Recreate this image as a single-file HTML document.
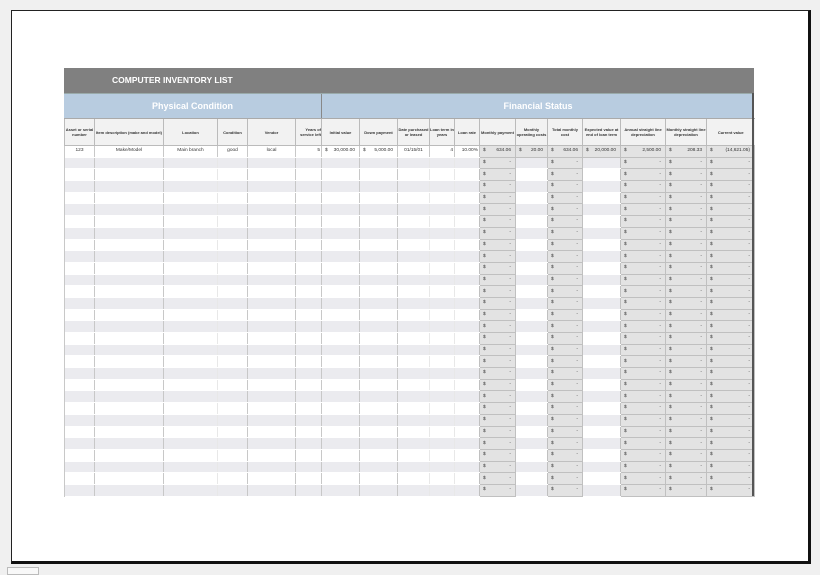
<!DOCTYPE html>
<html><head><meta charset="utf-8"><style>
html,body{margin:0;padding:0;width:820px;height:571px;background:#f0f0f0;overflow:hidden;font-family:"Liberation Sans",sans-serif;}
.page{position:absolute;left:11px;top:10px;width:796px;height:550px;background:#fff;border:1px solid #222;border-right:3px solid #111;border-bottom:3px solid #111;}
.tab{position:absolute;left:64px;top:68px;width:690px;}
.t1{height:25px;background:#808080;color:#fff;font-weight:bold;font-size:8.5px;line-height:25px;padding-left:48px;box-sizing:border-box;}
.t2{height:25px;background:#b8cce0;position:relative;border-top:1px solid #9aa;box-sizing:border-box;}
.t2 div{position:absolute;top:0;height:24px;line-height:24px;color:#fff;font-weight:bold;font-size:9px;text-align:center;}
table{border-collapse:collapse;table-layout:fixed;width:690px;}
th{height:26px;background:#f2f2f2;font-size:4px;font-weight:bold;color:#333;border-left:1px solid #bbb;border-top:1px solid #aaa;border-bottom:1px solid #bbb;padding:0;line-height:5px;overflow:hidden;}
td{height:10.7px;padding:0 1px;font-size:4.8px;color:#333;border-left:1px solid #c8c8c8;border-bottom:1px solid transparent;overflow:hidden;white-space:nowrap;line-height:10px;background:#fff;}
tr:nth-child(odd) td{background:#ebebef;}
tr.w td{background:#fff;}
td.n{border-left:1px solid #e8e8e8;}
td.g,tr:nth-child(odd) td.g,tr.w td.g{background:#e3e3e3;border:1px solid #c0c0c0;}
td i{font-style:normal;float:left;padding-left:2px;}
td b{font-weight:normal;float:right;padding-right:3px;}
.c{text-align:center}.r{text-align:right}
.rb{position:absolute;left:688px;top:25px;width:2px;height:403px;background:#555;}
</style></head><body>
<div class="page"></div>
<div style="position:absolute;left:7px;top:567px;width:30px;height:6px;border:1px solid #bbb;background:#f8f8f8"></div>
<div class="tab">
<div class="t1">COMPUTER INVENTORY LIST</div>
<div class="t2"><div style="left:0;width:257px;border-right:1px solid #888">Physical Condition</div><div style="left:258px;width:432px">Financial Status</div></div>
<table>
<colgroup><col style="width:30px"><col style="width:69px"><col style="width:54px"><col style="width:30px"><col style="width:48px"><col style="width:26px"><col style="width:38px"><col style="width:38px"><col style="width:32px"><col style="width:25px"><col style="width:25px"><col style="width:36px"><col style="width:32px"><col style="width:35px"><col style="width:38px"><col style="width:45px"><col style="width:41px"><col style="width:48px"></colgroup>
<tr><th>Asset or serial number</th><th>Item description (make and model)</th><th>Location</th><th>Condition</th><th>Vendor</th><th style="text-align:right">Years of service left</th><th>Initial value</th><th>Down payment</th><th>Date purchased or leased</th><th>Loan term in years</th><th>Loan rate</th><th>Monthly payment</th><th>Monthly operating costs</th><th>Total monthly cost</th><th>Expected value at end of loan term</th><th>Annual straight line depreciation</th><th>Monthly straight line depreciation</th><th>Current value</th></tr>
<tr class="w"><td class="c">123</td><td class="c">Make/Model</td><td class="c">Main branch</td><td class="c">good</td><td class="c">local</td><td class="r">5</td><td><i>$</i><b>30,000.00</b></td><td><i>$</i><b>5,000.00</b></td><td class="c">01/15/01</td><td class="r">4</td><td class="r">10.00%</td><td class="g"><i>$</i><b>634.06</b></td><td class="g"><i>$</i><b>20.00</b></td><td class="g"><i>$</i><b>634.06</b></td><td class="g"><i>$</i><b>20,000.00</b></td><td class="g"><i>$</i><b>2,500.00</b></td><td class="g"><i>$</i><b>208.33</b></td><td class="g"><i>$</i><b>(14,621.05)</b></td></tr>
<tr><td></td><td></td><td></td><td class="n"></td><td></td><td></td><td></td><td></td><td></td><td class="n"></td><td class="n"></td><td class="g"><i>$</i><b>-</b></td><td></td><td class="g"><i>$</i><b>-</b></td><td></td><td class="g"><i>$</i><b>-</b></td><td class="g"><i>$</i><b>-</b></td><td class="g"><i>$</i><b>-</b></td></tr>
<tr><td></td><td></td><td></td><td class="n"></td><td></td><td></td><td></td><td></td><td></td><td class="n"></td><td class="n"></td><td class="g"><i>$</i><b>-</b></td><td></td><td class="g"><i>$</i><b>-</b></td><td></td><td class="g"><i>$</i><b>-</b></td><td class="g"><i>$</i><b>-</b></td><td class="g"><i>$</i><b>-</b></td></tr>
<tr><td></td><td></td><td></td><td class="n"></td><td></td><td></td><td></td><td></td><td></td><td class="n"></td><td class="n"></td><td class="g"><i>$</i><b>-</b></td><td></td><td class="g"><i>$</i><b>-</b></td><td></td><td class="g"><i>$</i><b>-</b></td><td class="g"><i>$</i><b>-</b></td><td class="g"><i>$</i><b>-</b></td></tr>
<tr><td></td><td></td><td></td><td class="n"></td><td></td><td></td><td></td><td></td><td></td><td class="n"></td><td class="n"></td><td class="g"><i>$</i><b>-</b></td><td></td><td class="g"><i>$</i><b>-</b></td><td></td><td class="g"><i>$</i><b>-</b></td><td class="g"><i>$</i><b>-</b></td><td class="g"><i>$</i><b>-</b></td></tr>
<tr><td></td><td></td><td></td><td class="n"></td><td></td><td></td><td></td><td></td><td></td><td class="n"></td><td class="n"></td><td class="g"><i>$</i><b>-</b></td><td></td><td class="g"><i>$</i><b>-</b></td><td></td><td class="g"><i>$</i><b>-</b></td><td class="g"><i>$</i><b>-</b></td><td class="g"><i>$</i><b>-</b></td></tr>
<tr><td></td><td></td><td></td><td class="n"></td><td></td><td></td><td></td><td></td><td></td><td class="n"></td><td class="n"></td><td class="g"><i>$</i><b>-</b></td><td></td><td class="g"><i>$</i><b>-</b></td><td></td><td class="g"><i>$</i><b>-</b></td><td class="g"><i>$</i><b>-</b></td><td class="g"><i>$</i><b>-</b></td></tr>
<tr><td></td><td></td><td></td><td class="n"></td><td></td><td></td><td></td><td></td><td></td><td class="n"></td><td class="n"></td><td class="g"><i>$</i><b>-</b></td><td></td><td class="g"><i>$</i><b>-</b></td><td></td><td class="g"><i>$</i><b>-</b></td><td class="g"><i>$</i><b>-</b></td><td class="g"><i>$</i><b>-</b></td></tr>
<tr><td></td><td></td><td></td><td class="n"></td><td></td><td></td><td></td><td></td><td></td><td class="n"></td><td class="n"></td><td class="g"><i>$</i><b>-</b></td><td></td><td class="g"><i>$</i><b>-</b></td><td></td><td class="g"><i>$</i><b>-</b></td><td class="g"><i>$</i><b>-</b></td><td class="g"><i>$</i><b>-</b></td></tr>
<tr><td></td><td></td><td></td><td class="n"></td><td></td><td></td><td></td><td></td><td></td><td class="n"></td><td class="n"></td><td class="g"><i>$</i><b>-</b></td><td></td><td class="g"><i>$</i><b>-</b></td><td></td><td class="g"><i>$</i><b>-</b></td><td class="g"><i>$</i><b>-</b></td><td class="g"><i>$</i><b>-</b></td></tr>
<tr><td></td><td></td><td></td><td class="n"></td><td></td><td></td><td></td><td></td><td></td><td class="n"></td><td class="n"></td><td class="g"><i>$</i><b>-</b></td><td></td><td class="g"><i>$</i><b>-</b></td><td></td><td class="g"><i>$</i><b>-</b></td><td class="g"><i>$</i><b>-</b></td><td class="g"><i>$</i><b>-</b></td></tr>
<tr><td></td><td></td><td></td><td class="n"></td><td></td><td></td><td></td><td></td><td></td><td class="n"></td><td class="n"></td><td class="g"><i>$</i><b>-</b></td><td></td><td class="g"><i>$</i><b>-</b></td><td></td><td class="g"><i>$</i><b>-</b></td><td class="g"><i>$</i><b>-</b></td><td class="g"><i>$</i><b>-</b></td></tr>
<tr><td></td><td></td><td></td><td class="n"></td><td></td><td></td><td></td><td></td><td></td><td class="n"></td><td class="n"></td><td class="g"><i>$</i><b>-</b></td><td></td><td class="g"><i>$</i><b>-</b></td><td></td><td class="g"><i>$</i><b>-</b></td><td class="g"><i>$</i><b>-</b></td><td class="g"><i>$</i><b>-</b></td></tr>
<tr><td></td><td></td><td></td><td class="n"></td><td></td><td></td><td></td><td></td><td></td><td class="n"></td><td class="n"></td><td class="g"><i>$</i><b>-</b></td><td></td><td class="g"><i>$</i><b>-</b></td><td></td><td class="g"><i>$</i><b>-</b></td><td class="g"><i>$</i><b>-</b></td><td class="g"><i>$</i><b>-</b></td></tr>
<tr><td></td><td></td><td></td><td class="n"></td><td></td><td></td><td></td><td></td><td></td><td class="n"></td><td class="n"></td><td class="g"><i>$</i><b>-</b></td><td></td><td class="g"><i>$</i><b>-</b></td><td></td><td class="g"><i>$</i><b>-</b></td><td class="g"><i>$</i><b>-</b></td><td class="g"><i>$</i><b>-</b></td></tr>
<tr><td></td><td></td><td></td><td class="n"></td><td></td><td></td><td></td><td></td><td></td><td class="n"></td><td class="n"></td><td class="g"><i>$</i><b>-</b></td><td></td><td class="g"><i>$</i><b>-</b></td><td></td><td class="g"><i>$</i><b>-</b></td><td class="g"><i>$</i><b>-</b></td><td class="g"><i>$</i><b>-</b></td></tr>
<tr><td></td><td></td><td></td><td class="n"></td><td></td><td></td><td></td><td></td><td></td><td class="n"></td><td class="n"></td><td class="g"><i>$</i><b>-</b></td><td></td><td class="g"><i>$</i><b>-</b></td><td></td><td class="g"><i>$</i><b>-</b></td><td class="g"><i>$</i><b>-</b></td><td class="g"><i>$</i><b>-</b></td></tr>
<tr><td></td><td></td><td></td><td class="n"></td><td></td><td></td><td></td><td></td><td></td><td class="n"></td><td class="n"></td><td class="g"><i>$</i><b>-</b></td><td></td><td class="g"><i>$</i><b>-</b></td><td></td><td class="g"><i>$</i><b>-</b></td><td class="g"><i>$</i><b>-</b></td><td class="g"><i>$</i><b>-</b></td></tr>
<tr><td></td><td></td><td></td><td class="n"></td><td></td><td></td><td></td><td></td><td></td><td class="n"></td><td class="n"></td><td class="g"><i>$</i><b>-</b></td><td></td><td class="g"><i>$</i><b>-</b></td><td></td><td class="g"><i>$</i><b>-</b></td><td class="g"><i>$</i><b>-</b></td><td class="g"><i>$</i><b>-</b></td></tr>
<tr><td></td><td></td><td></td><td class="n"></td><td></td><td></td><td></td><td></td><td></td><td class="n"></td><td class="n"></td><td class="g"><i>$</i><b>-</b></td><td></td><td class="g"><i>$</i><b>-</b></td><td></td><td class="g"><i>$</i><b>-</b></td><td class="g"><i>$</i><b>-</b></td><td class="g"><i>$</i><b>-</b></td></tr>
<tr><td></td><td></td><td></td><td class="n"></td><td></td><td></td><td></td><td></td><td></td><td class="n"></td><td class="n"></td><td class="g"><i>$</i><b>-</b></td><td></td><td class="g"><i>$</i><b>-</b></td><td></td><td class="g"><i>$</i><b>-</b></td><td class="g"><i>$</i><b>-</b></td><td class="g"><i>$</i><b>-</b></td></tr>
<tr><td></td><td></td><td></td><td class="n"></td><td></td><td></td><td></td><td></td><td></td><td class="n"></td><td class="n"></td><td class="g"><i>$</i><b>-</b></td><td></td><td class="g"><i>$</i><b>-</b></td><td></td><td class="g"><i>$</i><b>-</b></td><td class="g"><i>$</i><b>-</b></td><td class="g"><i>$</i><b>-</b></td></tr>
<tr><td></td><td></td><td></td><td class="n"></td><td></td><td></td><td></td><td></td><td></td><td class="n"></td><td class="n"></td><td class="g"><i>$</i><b>-</b></td><td></td><td class="g"><i>$</i><b>-</b></td><td></td><td class="g"><i>$</i><b>-</b></td><td class="g"><i>$</i><b>-</b></td><td class="g"><i>$</i><b>-</b></td></tr>
<tr><td></td><td></td><td></td><td class="n"></td><td></td><td></td><td></td><td></td><td></td><td class="n"></td><td class="n"></td><td class="g"><i>$</i><b>-</b></td><td></td><td class="g"><i>$</i><b>-</b></td><td></td><td class="g"><i>$</i><b>-</b></td><td class="g"><i>$</i><b>-</b></td><td class="g"><i>$</i><b>-</b></td></tr>
<tr><td></td><td></td><td></td><td class="n"></td><td></td><td></td><td></td><td></td><td></td><td class="n"></td><td class="n"></td><td class="g"><i>$</i><b>-</b></td><td></td><td class="g"><i>$</i><b>-</b></td><td></td><td class="g"><i>$</i><b>-</b></td><td class="g"><i>$</i><b>-</b></td><td class="g"><i>$</i><b>-</b></td></tr>
<tr><td></td><td></td><td></td><td class="n"></td><td></td><td></td><td></td><td></td><td></td><td class="n"></td><td class="n"></td><td class="g"><i>$</i><b>-</b></td><td></td><td class="g"><i>$</i><b>-</b></td><td></td><td class="g"><i>$</i><b>-</b></td><td class="g"><i>$</i><b>-</b></td><td class="g"><i>$</i><b>-</b></td></tr>
<tr><td></td><td></td><td></td><td class="n"></td><td></td><td></td><td></td><td></td><td></td><td class="n"></td><td class="n"></td><td class="g"><i>$</i><b>-</b></td><td></td><td class="g"><i>$</i><b>-</b></td><td></td><td class="g"><i>$</i><b>-</b></td><td class="g"><i>$</i><b>-</b></td><td class="g"><i>$</i><b>-</b></td></tr>
<tr><td></td><td></td><td></td><td class="n"></td><td></td><td></td><td></td><td></td><td></td><td class="n"></td><td class="n"></td><td class="g"><i>$</i><b>-</b></td><td></td><td class="g"><i>$</i><b>-</b></td><td></td><td class="g"><i>$</i><b>-</b></td><td class="g"><i>$</i><b>-</b></td><td class="g"><i>$</i><b>-</b></td></tr>
<tr><td></td><td></td><td></td><td class="n"></td><td></td><td></td><td></td><td></td><td></td><td class="n"></td><td class="n"></td><td class="g"><i>$</i><b>-</b></td><td></td><td class="g"><i>$</i><b>-</b></td><td></td><td class="g"><i>$</i><b>-</b></td><td class="g"><i>$</i><b>-</b></td><td class="g"><i>$</i><b>-</b></td></tr>
<tr><td></td><td></td><td></td><td class="n"></td><td></td><td></td><td></td><td></td><td></td><td class="n"></td><td class="n"></td><td class="g"><i>$</i><b>-</b></td><td></td><td class="g"><i>$</i><b>-</b></td><td></td><td class="g"><i>$</i><b>-</b></td><td class="g"><i>$</i><b>-</b></td><td class="g"><i>$</i><b>-</b></td></tr>
</table>
<div class="rb"></div>
</div>
</body></html>
